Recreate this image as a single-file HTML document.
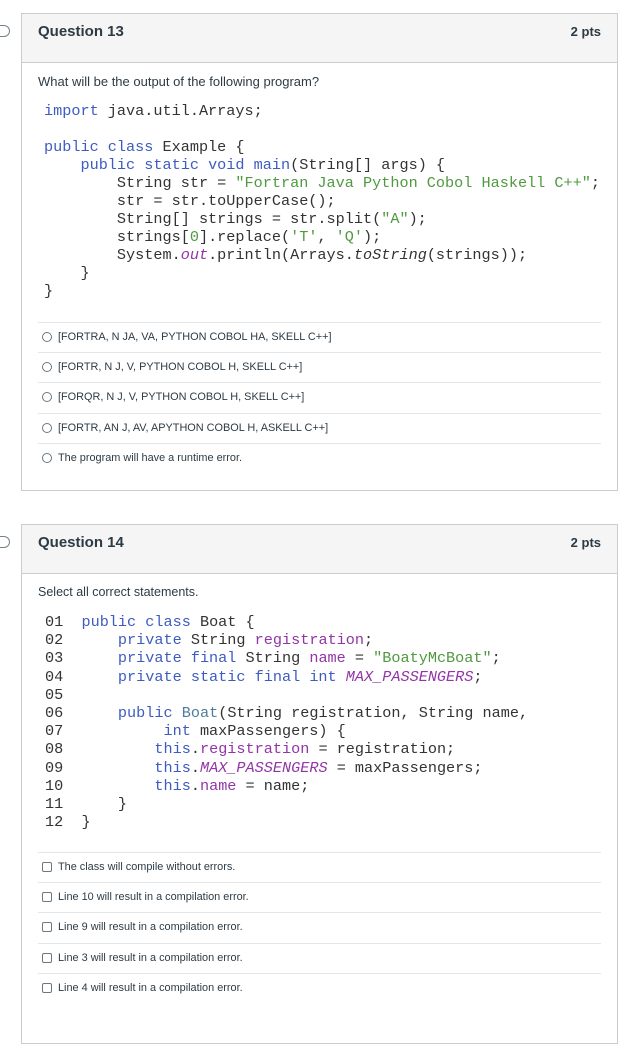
<!DOCTYPE html>
<html><head><meta charset="utf-8"><style>
*{margin:0;padding:0;box-sizing:border-box}
body{width:637px;height:1024px;background:#fff;position:relative;overflow:hidden;font-family:"Liberation Sans",sans-serif;color:#2d3b45}
.card{position:absolute;left:21px;width:597px;border:1px solid #c7cdd1}
.hdr{position:absolute;left:0;right:0;top:0;height:49px;background:#f5f5f5;border-bottom:1px solid #c7cdd1}
.hdr .t{position:absolute;left:16px;top:9px;font-size:15px;font-weight:bold;color:#2d3b45}
.hdr .p{position:absolute;right:16px;top:10px;font-size:13px;font-weight:bold;color:#2d3b45}
.tab{position:absolute;left:-3px;width:13px;height:12px;border:1.5px solid #73818a;border-left:none;border-radius:0 6px 6px 0;background:#fff}
.q{position:absolute;left:38px;color:#2d3b45}
.code{position:absolute;font-family:"Liberation Mono",monospace;font-size:15.2px;line-height:18px;color:#333;white-space:pre}
.k{color:#3d5cc0}.s{color:#4f9a3f}.v{color:#9235a6}.i{font-style:italic}.m{color:#4f7d9a}
.opt{position:absolute;left:38px;width:563px;height:30px;border-top:1px solid #e4e6e8;font-size:10.9px;color:#2d3b45}
.opt span{position:absolute;left:20px;top:8px}
.opt i{position:absolute;left:4px;top:9px;width:10px;height:10px;border:1px solid #6b7780;border-radius:50%}
.opt i.sq{border-radius:2px}
</style></head><body>
<div class="tab" style="top:25px"></div>
<div class="card" style="top:13px;height:478px">
 <div class="hdr"><div class="t">Question 13</div><div class="p">2 pts</div></div>
</div>
<div class="q" style="top:74px;font-size:13px">What will be the output of the following program?</div>
<div class="code" style="left:44px;top:102px"><span class="k">import</span> java.util.Arrays;

<span class="k">public class</span> Example {
    <span class="k">public static void main</span>(String[] args) {
        String str = <span class="s">"Fortran Java Python Cobol Haskell C++"</span>;
        str = str.toUpperCase();
        String[] strings = str.split(<span class="s">"A"</span>);
        strings[<span class="s">0</span>].replace(<span class="s">'T'</span>, <span class="s">'Q'</span>);
        System.<span class="v i">out</span>.println(Arrays.<span class="i">toString</span>(strings));
    }
}</div>
<div class="opt" style="top:322px"><i></i><span>[FORTRA, N JA, VA, PYTHON COBOL HA, SKELL C++]</span></div>
<div class="opt" style="top:352px"><i></i><span>[FORTR, N J, V, PYTHON COBOL H, SKELL C++]</span></div>
<div class="opt" style="top:382px"><i></i><span>[FORQR, N J, V, PYTHON COBOL H, SKELL C++]</span></div>
<div class="opt" style="top:413px"><i></i><span>[FORTR, AN J, AV, APYTHON COBOL H, ASKELL C++]</span></div>
<div class="opt" style="top:443px"><i></i><span>The program will have a runtime error.</span></div>

<div class="tab" style="top:536px"></div>
<div class="card" style="top:524px;height:520px">
 <div class="hdr"><div class="t">Question 14</div><div class="p">2 pts</div></div>
</div>
<div class="q" style="top:585px;font-size:12.5px">Select all correct statements.</div>
<div class="code" style="left:45px;top:613px;line-height:18.2px">01  <span class="k">public class</span> Boat {
02      <span class="k">private</span> String <span class="v">registration</span>;
03      <span class="k">private final</span> String <span class="v">name</span> = <span class="s">"BoatyMcBoat"</span>;
04      <span class="k">private static final int</span> <span class="v i">MAX_PASSENGERS</span>;
05
06      <span class="k">public</span> <span class="m">Boat</span>(String registration, String name,
07           <span class="k">int</span> maxPassengers) {
08          <span class="k">this</span>.<span class="v">registration</span> = registration;
09          <span class="k">this</span>.<span class="v i">MAX_PASSENGERS</span> = maxPassengers;
10          <span class="k">this</span>.<span class="v">name</span> = name;
11      }
12  }</div>
<div class="opt" style="top:852px"><i class="sq"></i><span>The class will compile without errors.</span></div>
<div class="opt" style="top:882px"><i class="sq"></i><span>Line 10 will result in a compilation error.</span></div>
<div class="opt" style="top:912px"><i class="sq"></i><span>Line 9 will result in a compilation error.</span></div>
<div class="opt" style="top:943px"><i class="sq"></i><span>Line 3 will result in a compilation error.</span></div>
<div class="opt" style="top:973px"><i class="sq"></i><span>Line 4 will result in a compilation error.</span></div>
</body></html>
